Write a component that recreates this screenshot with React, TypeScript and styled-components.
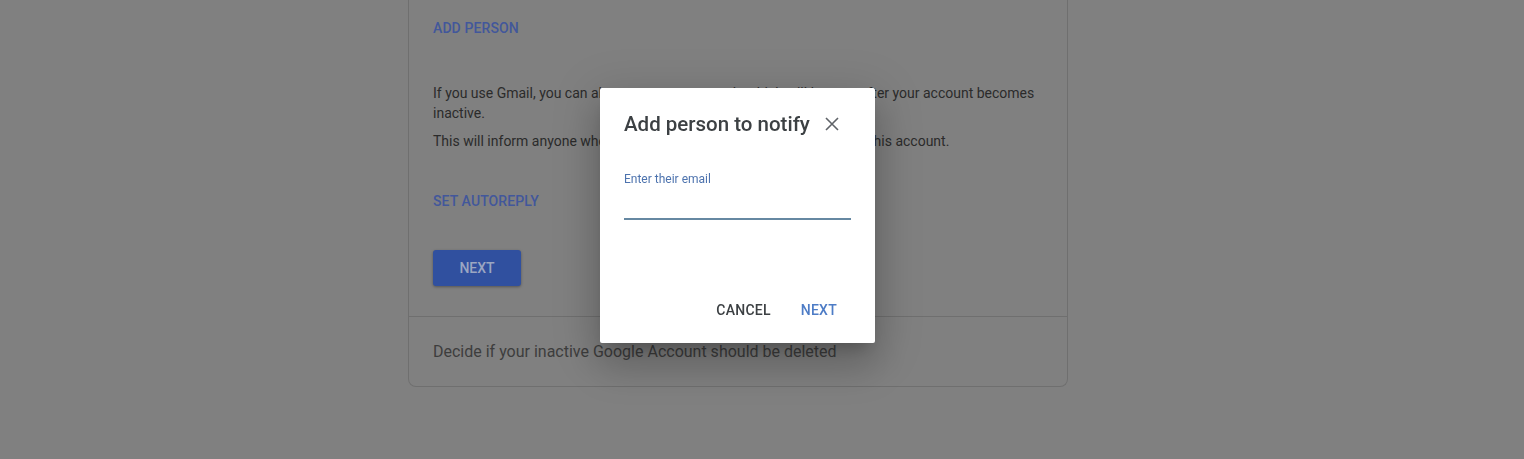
import React from "react";
import styled, { createGlobalStyle } from "styled-components";

const Global = createGlobalStyle`
  html, body { margin: 0; padding: 0; }
  body {
    background: #808080;
    font-family: Roboto, "Liberation Sans", Arial, sans-serif;
    width: 1524px;
    height: 459px;
    overflow: hidden;
  }
`;

const Layout = styled.div`
  display: grid;
  grid-template-columns: 408px 660px;
`;

const Card = styled.section`
  grid-column: 2;
  border: 1px solid #6f6f6f;
  border-top: none;
  border-radius: 0 0 8px 8px;
  display: flex;
  flex-direction: column;
`;

const Section = styled.div<{ $pad?: string }>`
  padding: ${(p) => p.$pad ?? "0 24px"};
  display: flex;
  flex-direction: column;
  align-items: flex-start;
`;

const Divider = styled.div`
  height: 1px;
  margin-top: 30px;
  background: #6f6f6f;
`;

const TextLink = styled.button<{ $mt?: number }>`
  font-family: Roboto, "Liberation Sans", Arial, sans-serif;
  font-size: 14px;
  font-weight: 500;
  letter-spacing: 0.1px;
  color: #42579b;
  background: none;
  border: none;
  padding: 0;
  height: 36px;
  margin-top: ${(p) => p.$mt ?? 0}px;
  cursor: pointer;
`;

const Para = styled.p<{ $mt?: number }>`
  margin: ${(p) => p.$mt ?? 0}px 0 0;
  font-size: 14px;
  line-height: 20px;
  color: #2b2b2b;
  max-width: 622px;
`;

const Filled = styled.button`
  margin-top: 31px;
  width: 88px;
  height: 36px;
  border: none;
  border-radius: 3px;
  background: #30509f;
  color: #9ba6c2;
  font-family: Roboto, "Liberation Sans", Arial, sans-serif;
  font-size: 14px;
  font-weight: 500;
  box-shadow: 0 1px 3px rgba(0, 0, 0, 0.35);
`;

const Footer = styled.div`
  padding: 24px 24px 23px;
  font-size: 16px;
  line-height: 22px;
  color: #3d3d3d;
`;

const Scrim = styled.div`
  position: fixed;
  inset: 0;
  display: flex;
  justify-content: flex-start;
  align-items: flex-start;
  padding: 88px 0 0 600px;
`;

const Dialog = styled.div`
  width: 275px;
  height: 255px;
  background: #fff;
  border-radius: 2px;
  box-shadow: 0 11px 15px -7px rgba(0, 0, 0, 0.2),
    0 24px 38px 3px rgba(0, 0, 0, 0.14), 0 9px 46px 8px rgba(0, 0, 0, 0.12);
  box-sizing: border-box;
  padding: 24px 24px 0;
  display: flex;
  flex-direction: column;
`;

const TitleRow = styled.div`
  display: flex;
  align-items: center;
  gap: 8px;
  height: 24px;
`;

const Title = styled.h2`
  margin: 0;
  font-size: 20.5px;
  font-weight: 500;
  line-height: 24px;
  color: #3c4043;
  white-space: nowrap;
`;

const CloseBtn = styled.button`
  width: 28px;
  height: 28px;
  padding: 0;
  border: none;
  background: none;
  display: flex;
  align-items: center;
  justify-content: center;
  color: #5f6368;
`;

const Field = styled.label`
  margin-top: 35px;
  display: flex;
  flex-direction: column;
  width: 227px;
`;

const FieldLabel = styled.span`
  font-size: 12px;
  line-height: 16px;
  color: #4d73ae;
`;

const Input = styled.input`
  border: none;
  border-bottom: 2px solid #6688a2;
  outline: none;
  height: 31px;
  padding: 0;
  font-size: 16px;
  font-family: Roboto, "Liberation Sans", Arial, sans-serif;
`;

const Actions = styled.div`
  margin-top: auto;
  margin-bottom: 15px;
  display: flex;
  justify-content: flex-end;
  gap: 30px;
  padding-right: 14px;
`;

const ActionBtn = styled.button<{ $primary?: boolean }>`
  border: none;
  background: none;
  padding: 0;
  height: 36px;
  font-family: Roboto, "Liberation Sans", Arial, sans-serif;
  font-size: 14px;
  font-weight: 500;
  letter-spacing: 0.25px;
  color: ${(p) => (p.$primary ? "#4d7cc6" : "#3c4043")};
`;

export default function App() {
  return (
    <>
      <Global />
      <Layout>
        <Card>
          <Section $pad="10px 24px 0">
            <TextLink>ADD PERSON</TextLink>
            <Para $mt={37}>
              If you use Gmail, you can also set up an auto-reply which will be sent after your
              account becomes inactive.
            </Para>
            <Para $mt={8}>
              This will inform anyone who writes to you that you are no longer using this account.
            </Para>
            <TextLink $mt={32}>SET AUTOREPLY</TextLink>
            <Filled>NEXT</Filled>
          </Section>
          <Divider />
          <Footer>Decide if your inactive Google Account should be deleted</Footer>
        </Card>
      </Layout>
      <Scrim>
        <Dialog role="dialog">
          <TitleRow>
            <Title>Add person to notify</Title>
            <CloseBtn aria-label="Close">
              <svg width="14" height="14" viewBox="0 0 14 14">
                <path d="M1 1L13 13M13 1L1 13" stroke="currentColor" strokeWidth="1.6" />
              </svg>
            </CloseBtn>
          </TitleRow>
          <Field>
            <FieldLabel>Enter their email</FieldLabel>
            <Input type="email" />
          </Field>
          <Actions>
            <ActionBtn>CANCEL</ActionBtn>
            <ActionBtn $primary>NEXT</ActionBtn>
          </Actions>
        </Dialog>
      </Scrim>
    </>
  );
}
